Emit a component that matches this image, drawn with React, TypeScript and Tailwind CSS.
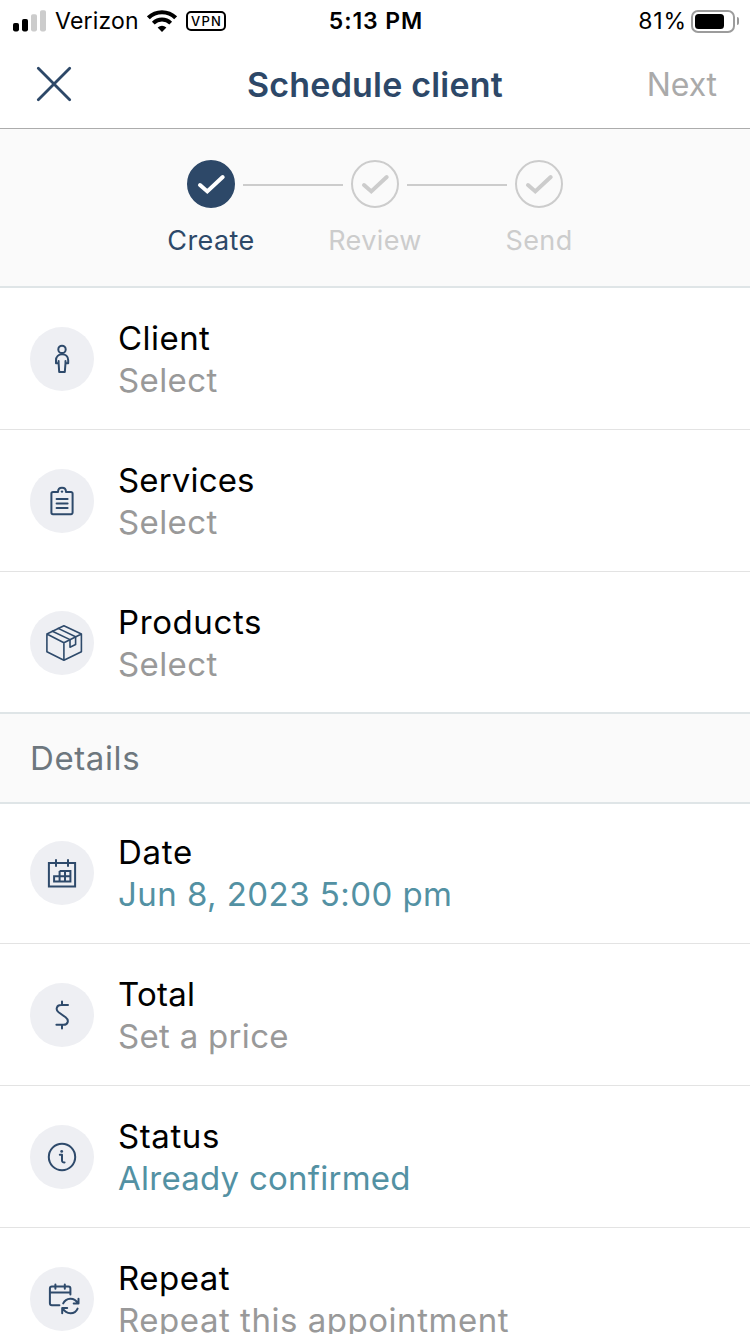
import type { ReactNode } from "react";

const icons: Record<string, ReactNode> = {
  client: (
    <>
      <circle cx="32" cy="22.4" r="3.7" />
      <path d="M28.6 34V36.2H26V33.2C26 29.6 28.6 27.2 32 27.2S38.2 29.6 38.2 33.2V36.2H35.5V34M28.6 36L29.2 45H34.8L35.5 36" />
    </>
  ),
  services: (
    <>
      <path d="M28 23H23a1.6 1.6 0 0 0-1.6 1.6V43.6A1.6 1.6 0 0 0 23 45.2H41a1.6 1.6 0 0 0 1.6-1.6V24.6A1.6 1.6 0 0 0 41 23H36C36 20.3 34.4 18.8 32 18.8S28 20.3 28 23" />
      <circle cx="32" cy="22.6" r="1.2" fill="#2e4a6b" stroke="none" />
      <path d="M26.6 29.9H37.6M26.6 34.5H37.6M26.6 39.1H37.6" />
    </>
  ),
  products: (
    <g strokeWidth="1.6">
      <path d="M33.9 14.7L51.4 23V40.8L33.9 49.3L16.9 40.8V23ZM16.9 23L33.9 31.8L51.4 23M33.9 31.8V49.3" />
      <path d="M22.4 20.2L40 28.6V36.2L45.6 33.6V25.8L28.2 17.4" />
    </g>
  ),
  date: (
    <g strokeLinecap="butt" strokeLinejoin="miter">
      <path d="M18.9 22.1H45.1V45.5H18.9ZM26 18.2V25.8M38 18.2V25.8" />
      <path d="M29.6 29.9H40.4V40.4H24.1V35.2H40.4M29.6 29.9V40.4M35 29.9V40.4" />
    </g>
  ),
  total: (
    <path d="M32 18.6V22M38 22.1H31C26.6 22.1 25.2 26.6 28.6 29.3L35.6 34.3C39.4 37.2 38 41.8 33.6 41.8H26.4M32 41.8V45.6" />
  ),
  status: (
    <>
      <circle cx="32" cy="32" r="13.2" />
      <circle cx="31.7" cy="26.4" r="1.4" fill="#2e4a6b" stroke="none" />
      <path d="M29.8 29.8H32V35.6Q32 37.5 34.6 37.4" />
    </>
  ),
  repeat: (
    <>
      <path d="M29.4 38.3H21.9a2 2 0 0 1-2-2V21.6a2 2 0 0 1 2-2H38.4a2 2 0 0 1 2 2V27.4M19.9 25.4H40.4M25.4 17.6V21.8M34.8 17.6V21.8" />
      <path d="M33.2 36.4C36 30.6 44 29.8 47.8 36M48.5 31.8V36.5H43.7M47.6 41.6C45 47.6 36.4 48 32.8 41.6M32.2 46.2V41H37.2" />
    </>
  ),
};

interface RowProps {
  icon: string;
  title: string;
  value: string;
  set?: boolean;
  className: string;
  titleClass?: string;
  valueClass?: string;
}

function Row({ icon, title, value, set, className, titleClass = "tracking-[0.45px]", valueClass = "tracking-[0.4px]" }: RowProps) {
  return (
    <div className={`flex shrink-0 items-center pl-[30px] ${className}`}>
      <div className="size-16 shrink-0 rounded-full bg-[#eeeff3]">
        <svg viewBox="0 0 64 64" className="size-16" fill="none" stroke="#2e4a6b" strokeWidth="2" strokeLinecap="round" strokeLinejoin="round">
          {icons[icon]}
        </svg>
      </div>
      <div className="ml-6 text-[33px] leading-[42px] whitespace-nowrap">
        <div className={`text-black ${titleClass}`}>{title}</div>
        <div className={`${set ? "text-[#5391a3]" : "text-[#999999]"} ${valueClass}`}>{value}</div>
      </div>
    </div>
  );
}

function Step({ active }: { active?: boolean }) {
  return (
    <div className={`size-12 shrink-0 rounded-full border-2 ${active ? "border-[#2d4868] bg-[#2d4868]" : "border-[#cccccc]"}`}>
      <svg viewBox="2 2 44 44" className="size-11" fill="none" stroke={active ? "#ffffff" : "#cccccc"} strokeWidth="4" strokeLinecap="round" strokeLinejoin="miter">
        <path d="M13 25L20.3 31.4L35.7 17" />
      </svg>
    </div>
  );
}

export default function App() {
  return (
    <div className="flex h-[1334px] w-[750px] flex-col overflow-hidden bg-white font-['Inter',sans-serif] text-black">
      <div className="grid h-10 shrink-0 grid-cols-3 items-center text-[23px] leading-[41px] whitespace-nowrap">
        <div className="flex h-10 items-center pl-[13px]">
          <svg viewBox="0 0 33 22" className="mt-[-1px] h-[22px] w-[33px]">
            <rect x="0" y="13" width="6" height="8.4" rx="1.8" />
            <rect x="9" y="9" width="6" height="12.4" rx="1.8" />
            <rect x="18" y="4.2" width="6" height="17.2" rx="1.8" fill="#cccccc" />
            <rect x="27" y="0.2" width="6" height="21.2" rx="1.8" fill="#cccccc" />
          </svg>
          <span className="ml-[9px] w-[92px] pt-px tracking-[0.2px]">Verizon</span>
          <svg viewBox="0 0 30 22" className="mr-px h-[22px] w-[30px] shrink-0" fill="none" stroke="#000" strokeWidth="4">
            <path d="M1.4 7.8C9 0.3 21 0.3 28.6 7.8" />
            <path d="M6.3 13.1C11.3 8.4 18.7 8.4 23.7 13.1" />
            <path d="M15 22L10.6 17.6Q15 14 19.4 17.6Z" fill="#000" stroke="none" />
          </svg>
          <div className="ml-2 flex h-5 w-10 shrink-0 items-center justify-center rounded-[5px] border-2 border-black text-[13px] leading-4 font-medium tracking-[1.2px]">
            <span className="pl-px">VPN</span>
          </div>
        </div>
        <div className="pt-px pl-[2px] text-center font-semibold tracking-[0.9px]">5:13 PM</div>
        <div className="flex h-10 items-center justify-end pr-[11px]">
          <span className="pt-px tracking-[0.9px]">81%</span>
          <div className="ml-[4px] h-[23px] w-11 rounded-[7px] border-2 border-[#9c9c9c] p-[2px]">
            <div className="h-[15px] w-[29px] rounded-[3.5px] bg-black" />
          </div>
          <div className="ml-[2px] h-2 w-[2px] rounded-r-full bg-[#999999]" />
        </div>
      </div>

      <div className="grid h-[89px] shrink-0 grid-cols-[150px_1fr_150px] items-center border-b border-[#acacac]">
        <svg viewBox="0 0 36 36" className="ml-9 size-9" stroke="#2d4868" strokeWidth="2.8" strokeLinecap="round">
          <path d="M2.3 2.3L33.7 33.7M33.7 2.3L2.3 33.7" />
        </svg>
        <h1 className="pt-px text-center text-[34px] leading-[42px] font-semibold tracking-[0.2px] text-[#2d4868]">Schedule client</h1>
        <div className="pt-[2px] pr-[33px] text-right text-[32px] leading-[42px] tracking-[-0.1px] text-[#aaaaaa]">Next</div>
      </div>

      <div className="flex h-[159px] shrink-0 flex-col items-center border-b-2 border-[#dfe5e7] bg-[#fafafa] pt-[31px]">
        <div className="flex items-center gap-2">
          <Step active />
          <div className="mt-[2px] h-[2px] w-[100px] bg-[#cccccc]" />
          <Step />
          <div className="mt-[2px] h-[2px] w-[100px] bg-[#cccccc]" />
          <Step />
        </div>
        <div className="mt-[17px] grid w-[492px] grid-cols-3 text-center text-[27px] leading-8 tracking-[0.4px] text-[#cccccc]">
          <span className="text-[#2d4868]">Create</span>
          <span>Review</span>
          <span>Send</span>
        </div>
      </div>

      <Row icon="client" title="Client" value="Select" className="h-[142px] border-b border-[#e3e3e3] pt-px" />
      <Row icon="services" title="Services" value="Select" titleClass="tracking-[0.15px]" className="h-[142px] border-b border-[#e3e3e3] pt-px" />
      <Row icon="products" title="Products" value="Select" titleClass="tracking-[0.6px]" className="h-[142px] border-b-2 border-[#dfe5e7] pt-[2px]" />
      <div className="flex h-[90px] shrink-0 items-center border-b-2 border-[#dfe5e7] bg-[#fafafa] pl-[30px] text-[33px] leading-[42px] tracking-[0.6px] text-[#6d777e]">
        Details
      </div>
      <Row icon="date" title="Date" value="Jun 8, 2023 5:00 pm" set titleClass="tracking-[0.7px]" valueClass="tracking-[0.45px]" className="h-[140px] border-b border-[#e3e3e3] pb-px" />
      <Row icon="total" title="Total" value="Set a price" titleClass="tracking-[0.25px]" valueClass="tracking-[0.3px]" className="h-[142px] border-b border-[#e3e3e3] pt-px" />
      <Row icon="status" title="Status" value="Already confirmed" set titleClass="tracking-[0.6px]" valueClass="tracking-[0.25px]" className="h-[142px] border-b border-[#e3e3e3] pt-px" />
      <Row icon="repeat" title="Repeat" value="Repeat this appointment" titleClass="tracking-[0.5px]" valueClass="tracking-[0.53px]" className="h-[142px] border-b border-[#e3e3e3] pt-px" />
    </div>
  );
}
